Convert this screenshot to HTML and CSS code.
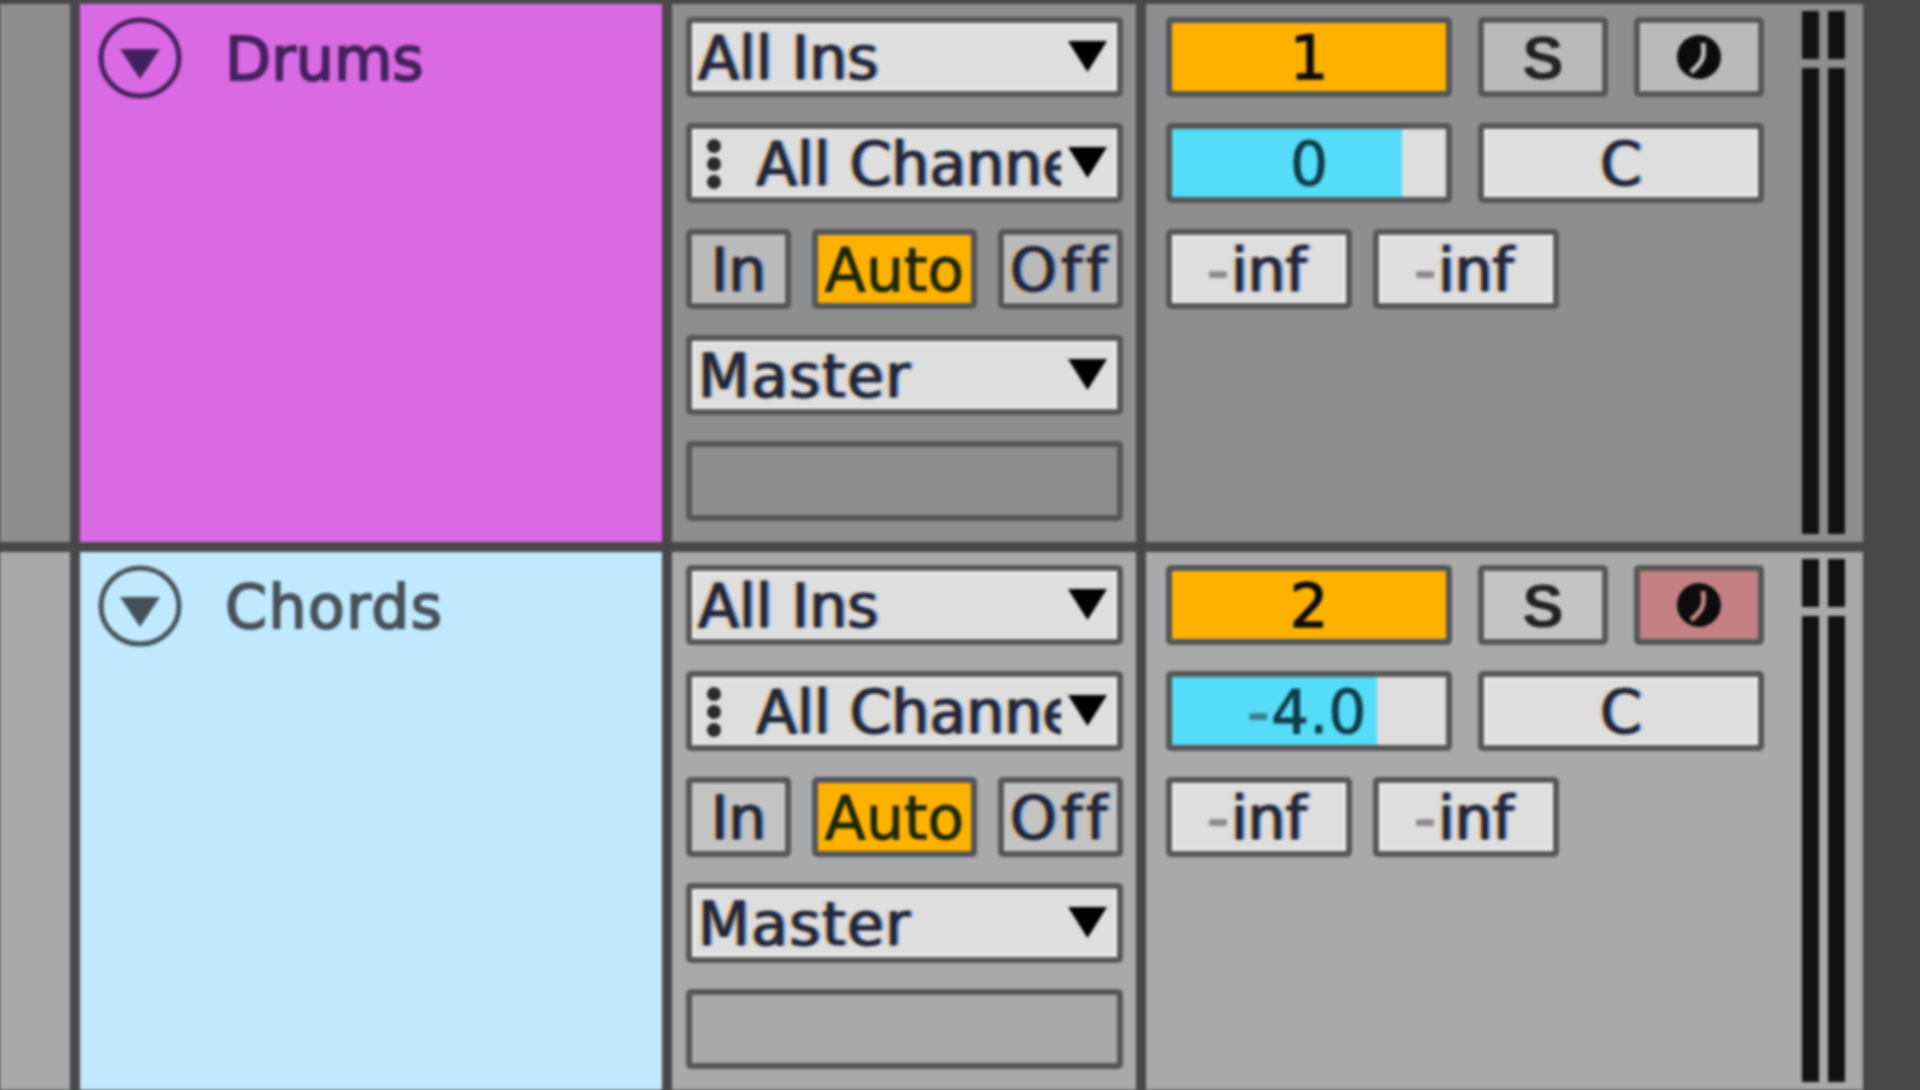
FILE: index.html
```html
<!DOCTYPE html>
<html>
  <head>
    <title>Tracks</title>
    <meta charset="utf-8">
    <link rel="stylesheet" href="styles.css">
  </head>
  <body>
    <div class="tracks">

      <div class="track track-dark">
        <div class="strip"></div>
        <div class="title title-drums">
          <svg class="fold" viewBox="0 0 84 82"><ellipse cx="42" cy="41" rx="39" ry="38" fill="none" stroke="currentColor" stroke-width="5"/><path d="M22 32H62L42 62Z" fill="currentColor"/></svg>
          <span class="name">Drums</span>
        </div>
        <div class="routing">
          <div class="ctl select"><span>All Ins</span><svg class="arrow" viewBox="0 0 39 31"><path d="M0 0H39L19.5 31Z"/></svg></div>
          <div class="ctl select">
            <svg class="dots" viewBox="0 0 18 50"><circle cx="9" cy="7" r="7"/><circle cx="9" cy="25" r="7"/><circle cx="9" cy="43" r="7"/></svg>
            <span class="clip">All Channels</span>
            <svg class="arrow" viewBox="0 0 39 31"><path d="M0 0H39L19.5 31Z"/></svg>
          </div>
          <div class="monitor">
            <div class="ctl btn btn-in">In</div>
            <div class="ctl btn btn-auto on">Auto</div>
            <div class="ctl btn btn-off">Off</div>
          </div>
          <div class="ctl select"><span class="spaced">Master</span><svg class="arrow" viewBox="0 0 39 31"><path d="M0 0H39L19.5 31Z"/></svg></div>
          <div class="ctl slot"></div>
        </div>
        <div class="mixer">
          <div class="controls">
            <div class="line">
              <div class="ctl btn wide on strong">1</div>
              <div class="ctl btn small">S</div>
              <div class="ctl btn small">
                <svg class="clock" viewBox="0 0 46 46"><circle cx="23" cy="23" r="22" fill="#0c0c0c"/><path d="M27 9C29 23 27 28 15 38" fill="none" stroke="#bdbdbd" stroke-width="5"/></svg>
              </div>
            </div>
            <div class="line">
              <div class="ctl btn wide vol vol-zero">0</div>
              <div class="ctl btn pan light">C</div>
            </div>
            <div class="line line-tight">
              <div class="ctl btn peak light"><span class="dash">-</span>inf</div>
              <div class="ctl btn peak light"><span class="dash">-</span>inf</div>
            </div>
          </div>
          <div class="meter">
            <div class="bar"><i class="cap"></i><i class="level"></i></div>
            <div class="bar"><i class="cap"></i><i class="level"></i></div>
          </div>
        </div>
      </div>

      <div class="track track-light">
        <div class="strip"></div>
        <div class="title title-chords">
          <svg class="fold" viewBox="0 0 84 82"><ellipse cx="42" cy="41" rx="39" ry="38" fill="none" stroke="currentColor" stroke-width="5"/><path d="M22 32H62L42 62Z" fill="currentColor"/></svg>
          <span class="name">Chords</span>
        </div>
        <div class="routing">
          <div class="ctl select"><span>All Ins</span><svg class="arrow" viewBox="0 0 39 31"><path d="M0 0H39L19.5 31Z"/></svg></div>
          <div class="ctl select">
            <svg class="dots" viewBox="0 0 18 50"><circle cx="9" cy="7" r="7"/><circle cx="9" cy="25" r="7"/><circle cx="9" cy="43" r="7"/></svg>
            <span class="clip">All Channels</span>
            <svg class="arrow" viewBox="0 0 39 31"><path d="M0 0H39L19.5 31Z"/></svg>
          </div>
          <div class="monitor">
            <div class="ctl btn btn-in">In</div>
            <div class="ctl btn btn-auto on">Auto</div>
            <div class="ctl btn btn-off">Off</div>
          </div>
          <div class="ctl select"><span class="spaced">Master</span><svg class="arrow" viewBox="0 0 39 31"><path d="M0 0H39L19.5 31Z"/></svg></div>
          <div class="ctl slot"></div>
        </div>
        <div class="mixer">
          <div class="controls">
            <div class="line">
              <div class="ctl btn wide on strong">2</div>
              <div class="ctl btn small">S</div>
              <div class="ctl btn small armed">
                <svg class="clock" viewBox="0 0 46 46"><circle cx="23" cy="23" r="22" fill="#0c0c0c"/><path d="M27 9C29 23 27 28 15 38" fill="none" stroke="#c58084" stroke-width="5"/></svg>
              </div>
            </div>
            <div class="line">
              <div class="ctl btn wide vol vol-minus"><span class="dash">-</span>4.0</div>
              <div class="ctl btn pan light">C</div>
            </div>
            <div class="line line-tight">
              <div class="ctl btn peak light"><span class="dash">-</span>inf</div>
              <div class="ctl btn peak light"><span class="dash">-</span>inf</div>
            </div>
          </div>
          <div class="meter">
            <div class="bar"><i class="cap"></i><i class="level"></i></div>
            <div class="bar"><i class="cap"></i><i class="level"></i></div>
          </div>
        </div>
      </div>

    </div>
  </body>
</html>
```

FILE: styles.css
```css
html, body {
  margin: 0;
  padding: 0;
  height: 100%;
  overflow: hidden;
  background-color: #484848;
}
body {
  font-family: "DejaVu Sans", sans-serif;
  font-size: 60px;
  color: #23253a;
}

.tracks {
  display: flex;
  flex-direction: column;
  gap: 10px;
  padding-top: 4px;
  height: 1090px;
  box-sizing: border-box;
  filter: blur(1.4px);
}
.track {
  display: grid;
  grid-template-columns: 70px 582px 464px 717px;
  column-gap: 10px;
  height: 538px;
  flex: none;
}
.track-dark { --panel: #8e8e8e; --soft: #bababa; }
.track-light { --panel: #a9a9a9; --soft: #c4c4c4; }

.strip, .routing, .mixer {
  background-color: var(--panel);
}

/* name area */
.title {
  display: flex;
  align-items: flex-start;
  gap: 43px;
  padding: 13px 0 0 18px;
  font-size: 60px;
  line-height: 80px;
}
.name {
  padding-top: 2px;
  -webkit-text-stroke: 2px currentColor;
}
.title-drums {
  background-color: #d96ae3;
  box-shadow: inset 0 0 3px 2px #e670f2;
  color: #45205f;
}
.title-chords {
  background-color: #c0e9ff;
  color: #46525a;
  letter-spacing: 1.5px;
}
.fold {
  width: 84px;
  height: 82px;
  flex: none;
}

/* shared control box */
.ctl {
  box-sizing: border-box;
  height: 80px;
  padding-top: 2px;
  border: 6px solid #565656;
  border-radius: 5px;
  background-color: #dedede;
  box-shadow: inset 0 0 2px 2px #f3f3f3;
  text-shadow: -3px 0 1px rgba(255, 150, 20, 0.6), 3px 0 1px rgba(20, 130, 255, 0.6);
  -webkit-text-stroke: 1px currentColor;
  white-space: nowrap;
}

/* routing column */
.routing {
  display: flex;
  flex-direction: column;
  gap: 26px;
  padding: 13px 13px 0 14px;
}
.select {
  display: flex;
  align-items: center;
  padding-left: 6px;
  padding-right: 10px;
}
.select .arrow {
  margin-left: auto;
  margin-top: -3px;
}
.spaced { letter-spacing: 1.4px; }
.arrow {
  width: 39px;
  height: 31px;
  flex: none;
}
.dots {
  width: 18px;
  height: 50px;
  flex: none;
  margin: 0 33px 0 7px;
  fill: #2a2a2a;
}
.clip {
  display: block;
  width: 305px;
  flex: none;
  overflow: hidden;
}
.monitor {
  display: flex;
  gap: 21px;
}

.btn {
  display: flex;
  align-items: center;
  justify-content: center;
  background-color: var(--soft);
  box-shadow: inset 0 0 2px 1px #cfcfcf;
}
.btn-in { width: 105px; }
.btn-auto { width: 165px; }
.btn-off { width: 125px; letter-spacing: 4px; }
.on {
  background-color: #ffb100;
  box-shadow: none;
  border-color: #50555c;
  text-shadow: none;
  color: #1c2600;
}
.strong {
  color: #0c0c0c;
  -webkit-text-stroke: 1.6px currentColor;
}
.slot {
  background-color: var(--panel);
  box-shadow: none;
}

/* mixer column */
.mixer {
  display: flex;
  padding-left: 20px;
}
.controls {
  display: flex;
  flex-direction: column;
  gap: 26px;
  width: 598px;
  padding-top: 13px;
}
.line {
  display: flex;
  gap: 26px;
}
.line-tight { gap: 21px; }
.wide { width: 286px; }
.small {
  width: 130px;
  padding-top: 0;
  color: #222;
  font-family: "Liberation Sans", sans-serif;
  font-size: 62px;
  font-weight: bold;
  text-shadow: none;
  -webkit-text-stroke: 0;
}
.armed {
  background-color: #c58084;
  box-shadow: none;
}
.light {
  background-color: #dedede;
  box-shadow: inset 0 0 2px 2px #f3f3f3;
}
.pan { width: 286px; }
.peak { width: 186px; }
.dash {
  margin-left: -4px;
  margin-right: 2px;
  color: #8c8c8c;
  -webkit-text-stroke: 2px currentColor;
  text-shadow: none;
}
.vol {
  box-shadow: none;
  color: #103c4a;
  text-shadow: none;
}
.vol .dash { color: #3d7f8f; }
.vol-zero { background: linear-gradient(to right, #55dcf8 230px, #dedede 230px); }
.vol-minus { background: linear-gradient(to right, #55dcf8 205px, #dedede 205px); }
.clock {
  width: 46px;
  height: 46px;
}

.meter {
  display: flex;
  gap: 9px;
  margin-left: 38px;
  padding: 7px 0 8px;
}
.bar {
  display: flex;
  flex-direction: column;
  gap: 9px;
  width: 17px;
}
.cap, .level {
  display: block;
  background-color: #111;
}
.cap { height: 48px; flex: none; }
.level { flex: 1; }
```
